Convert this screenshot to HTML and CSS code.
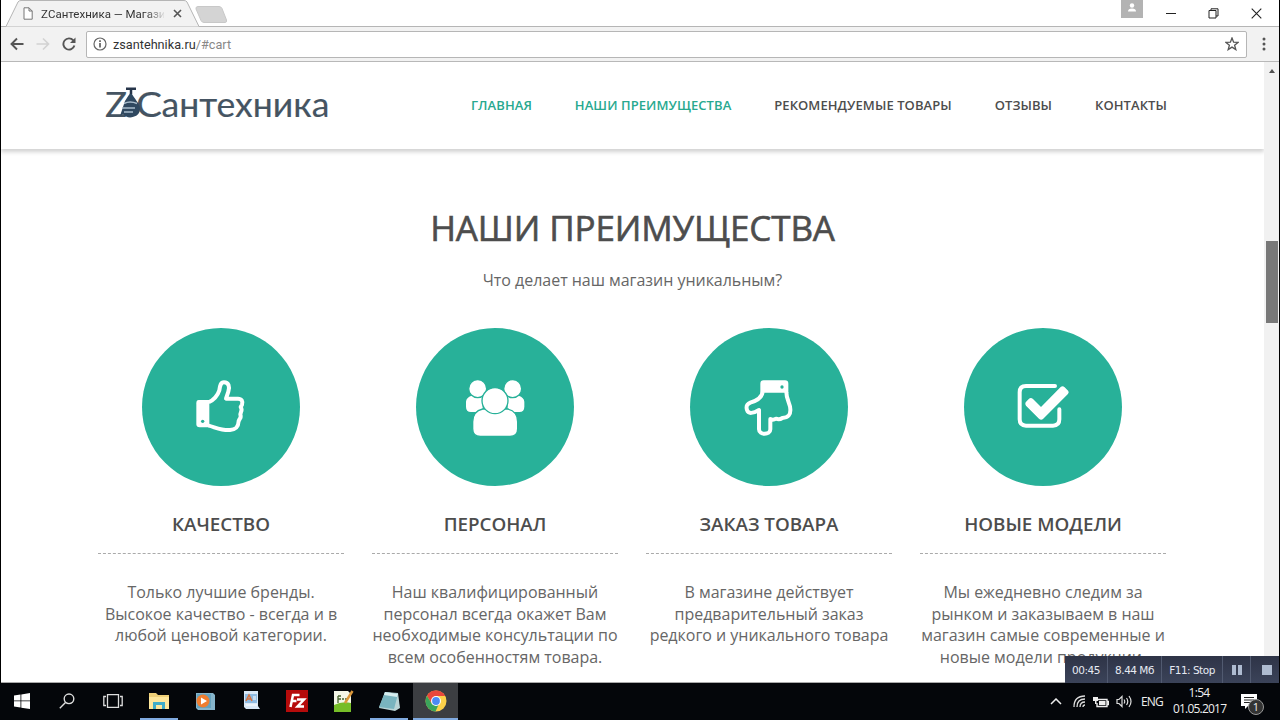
FILE: index.html
```html
<!DOCTYPE html>
<html lang="ru">
<head>
    <meta charset="UTF-8">
    <title>ZСантехника — Магазин</title>
    <link rel="stylesheet" href="styles.css">
</head>
<body>
    <div class="screen">
        <div class="titlebar">
            <div class="tab">
                <svg class="tab-shape" width="200" height="27" viewBox="0 0 200 27"><path d="M0 26.500H5L17 2Q18 .5 20 .5H183Q185 .5 186 2L198 26.500" fill="#f2f2f2" stroke="#b5b5b5"/></svg>
                <svg class="tab-doc" width="10" height="13" viewBox="0 0 10 13"><path d="M1 .8H6L9.200 4V12.200H1ZM6 .8V4H9.200" fill="#fff" stroke="#777"/></svg>
                <span class="tab-title">ZСантехника — Магазин</span>
                <svg class="tab-close" width="9" height="9" viewBox="0 0 9 9"><path d="M1 1L8 8M8 1L1 8" stroke="#555" stroke-width="1.600"/></svg>
            </div>
            <svg class="new-tab" width="33" height="17" viewBox="0 0 33 17"><path d="M3 .5H24Q26 .5 27 2.500L31.500 14Q32 16.500 30 16.500H9Q7 16.500 6 14.500L1 3Q.5 .5 3 .5Z" fill="#d4d4d4" stroke="#c8c8c8"/></svg>
            <div class="window-buttons">
                <svg class="user" width="22" height="18" viewBox="0 0 22 18"><path d="M0 0H22V18H0Z" fill="#b3b3b3"/><circle cx="11" cy="5.500" r="2.200" fill="#fff"/><path d="M7 11.500Q7 8.500 11 8.500T15 11.500Z" fill="#fff"/></svg>
                <svg class="minimize" width="10" height="10" viewBox="0 0 10 10"><path d="M0 5.500H10" stroke="#222"/></svg>
                <svg class="restore" width="11" height="11" viewBox="0 0 11 11"><path d="M1 2.500H8V10H1ZM3 2.500V.8H10V8H8" fill="none" stroke="#222"/></svg>
                <svg class="close" width="11" height="11" viewBox="0 0 11 11"><path d="M.7 .7L10.300 10.300M10.300 .7L.7 10.300" stroke="#222" stroke-width="1.100"/></svg>
            </div>
        </div>

        <div class="toolbar">
            <svg width="14" height="14" viewBox="0 0 14 14"><path d="M13.500 7H1.500M7 1.500L1.500 7L7 12.500" fill="none" stroke="#555" stroke-width="1.900"/></svg>
            <svg width="14" height="14" viewBox="0 0 14 14"><path d="M.5 7H12.500M7 1.500L12.500 7L7 12.500" fill="none" stroke="#d2d2d2" stroke-width="1.700"/></svg>
            <svg width="14" height="14" viewBox="0 0 14 14"><path d="M11.300 3.400A5.600 5.600 0 1 0 12.400 8.500" fill="none" stroke="#555" stroke-width="1.900"/><path d="M13.500 .5V6H8Z" fill="#555"/></svg>
            <div class="address">
                <svg width="14" height="14" viewBox="0 0 14 14"><circle cx="7" cy="7" r="6" fill="none" stroke="#666" stroke-width="1.200"/><path d="M7 6V10.500M7 3.300V4.900" stroke="#555" stroke-width="1.600"/></svg>
                <span class="url">zsantehnika.ru<span>/#cart</span></span>
                <svg class="star" width="14" height="14" viewBox="0 0 14 14"><path d="M7 1L8.600 5.200L13 5.400L9.600 8.200L10.800 12.600L7 10.100L3.200 12.600L4.400 8.200L1 5.400L5.400 5.200Z" fill="none" stroke="#555" stroke-width="1.300"/></svg>
            </div>
            <svg class="dots" width="4" height="14" viewBox="0 0 4 14" fill="#555"><circle cx="2" cy="2" r="1.500"/><circle cx="2" cy="7" r="1.500"/><circle cx="2" cy="12" r="1.500"/></svg>
        </div>

        <div class="viewport">
            <div class="page">
                <header class="header">
                    <svg class="logo" width="228" height="40" viewBox="0 0 228 40">
                        <text class="logo-text" x="0" y="31" textLength="22" lengthAdjust="spacingAndGlyphs">Z</text>
                        <text class="logo-text" x="31" y="31" textLength="26" lengthAdjust="spacingAndGlyphs">С</text>
                        <text class="logo-text" x="56.500" y="31" textLength="168" lengthAdjust="spacingAndGlyphs">антехника</text>
                        <path d="M26 6C29 13 35 17 35 23A9.500 8.500 0 0 1 18 28L15 30L20 15Q23 10 26 6Z" fill="#2f4860"/>
                        <path d="M21 2.800H31M26 3V8" stroke="#26354a" stroke-width="2.500"/>
                        <path d="M19 17.500Q25 14.500 32 17.500M17 22H30M19 26H28" fill="none" stroke="#a9bccb" stroke-width="1.500"/>
                    </svg>
                    <nav class="menu">
                        <a class="active">ГЛАВНАЯ</a>
                        <a class="active">НАШИ ПРЕИМУЩЕСТВА</a>
                        <a>РЕКОМЕНДУЕМЫЕ ТОВАРЫ</a>
                        <a>ОТЗЫВЫ</a>
                        <a>КОНТАКТЫ</a>
                    </nav>
                </header>

                <h1>НАШИ ПРЕИМУЩЕСТВА</h1>
                <p class="subtitle">Что делает наш магазин уникальным?</p>

                <div class="features">
                    <div class="feature">
                        <svg class="circle" viewBox="38 24 474 474">
                            <path d="M208 240H240V322H211Q201 322 201 312V250Q201 240 208 240Z" fill="#fff"/>
                            <path d="M238 247C250 241 264 229 270 211C272 199 273 187 284 187C298 187 302 200 297 215L290 236H326C337 236 341 244 338 254L334 261Q339 269 335 276L333 283Q336 291 331 297L328 303C327 323 318 329 302 330C278 332 258 322 238 317" fill="none" stroke="#fff" stroke-width="12" stroke-linejoin="round"/>
                            <circle cx="220" cy="304" r="5" fill="#28b199"/>
                        </svg>
                        <h3>КАЧЕСТВО</h3>
                        <p>Только лучшие бренды.<br>Высокое качество - всегда и в<br>любой ценовой категории.</p>
                    </div>
                    <div class="feature">
                        <svg class="circle" viewBox="33 24 474 474">
                            <g fill="#fff" stroke="#28b199" stroke-width="4">
                                <path d="M199 225H235V278H198Q181 278 181 260V245Q182 231 199 225ZM342 225H306V278H343Q360 278 360 260V245Q359 231 342 225Z"/>
                                <circle cx="218" cy="206" r="27"/>
                                <circle cx="323" cy="206" r="27"/>
                                <path d="M233 267H308Q338 274 338 305V326Q338 349 315 349H226Q203 349 203 326V305Q203 274 233 267Z"/>
                                <circle cx="270" cy="242" r="39"/>
                            </g>
                        </svg>
                        <h3>ПЕРСОНАЛ</h3>
                        <p>Наш квалифицированный<br>персонал всегда окажет Вам<br>необходимые консультации по<br>всем особенностям товара.</p>
                    </div>
                    <div class="feature">
                        <svg class="circle" viewBox="32 24 474 474">
                            <path d="M253 181H317Q327 181 327 191V218H243V191Q243 181 253 181Z" fill="#fff"/>
                            <path d="M250 216C248 233 232 242 213 248C201 253 200 260 203 270C207 283 222 280 239 270V328C239 346 273 346 273 328V297Q281 302 290 296Q300 300 309 294C327 293 334 284 333 268C333 250 321 240 321 216" fill="none" stroke="#fff" stroke-width="12" stroke-linejoin="round"/>
                            <circle cx="308" cy="201" r="5" fill="#28b199"/>
                        </svg>
                        <h3>ЗАКАЗ ТОВАРА</h3>
                        <p>В магазине действует<br>предварительный заказ<br>редкого и уникального товара</p>
                    </div>
                    <div class="feature">
                        <svg class="circle" viewBox="27 24 474 474">
                            <path d="M300 198H213Q194 198 194 217V298Q194 317 213 317H294Q313 317 313 298V268" fill="none" stroke="#fff" stroke-width="12" stroke-linecap="round"/>
                            <path d="M220 244L258 283L334 207" fill="none" stroke="#28b199" stroke-width="36"/>
                            <path d="M212 247L222 236Q228 232 234 237L258 261L317 201Q323 196 329 202L340 213Q343 218 338 223L264 297Q258 302 252 296L213 257Q209 252 212 247Z" fill="#fff"/>
                        </svg>
                        <h3>НОВЫЕ МОДЕЛИ</h3>
                        <p>Мы ежедневно следим за<br>рынком и заказываем в наш<br>магазин самые современные и<br>новые модели продукции.</p>
                    </div>
                </div>
            </div>
            <div class="scrollbar">
                <div class="scroll-up"></div>
                <div class="scroll-thumb"></div>
            </div>
        </div>

        <div class="taskbar">
            <div class="task"><svg width="16" height="16" viewBox="0 0 16 16" fill="#fff"><path d="M0 2.500L6.500 1.500V7.500H0ZM7.300 1.400L16 0V7.500H7.300ZM0 8.300H6.500V14.500L0 13.500ZM7.300 8.300H16V16L7.300 14.700Z"/></svg></div>
            <div class="task"><svg width="16" height="16" viewBox="0 0 16 16" fill="none" stroke="#ddd" stroke-width="1.400"><circle cx="10" cy="5.800" r="4.800"/><path d="M6.500 9.500L.8 15.200"/></svg></div>
            <div class="task"><svg width="20" height="14" viewBox="0 0 20 14" fill="none" stroke="#ddd" stroke-width="1.300"><path d="M4.500 .7H15.500V13.300H4.500ZM3 2.500H.8V11.500H3M17 2.500H19.200V11.500H17"/></svg></div>
            <div class="task open"><svg width="20" height="18" viewBox="0 0 20 18"><path d="M0 1H7L9 3H20V17H0Z" fill="#efd078"/><path d="M0 5H20V17H0Z" fill="#ffe79b"/><path d="M4 10H16V17H13V13H7V17H4Z" fill="#41adc8"/></svg></div>
            <div class="task"><svg width="20" height="18" viewBox="0 0 20 18"><path d="M1 1H18L20 3V18H3L1 16Z" fill="#86b4cb"/><path d="M2 2H16V16H2Z" fill="#65a2be"/><circle cx="8" cy="9" r="6.500" fill="#ef7d30"/><path d="M6 5.500L12 9L6 12.500Z" fill="#fff"/></svg></div>
            <div class="task"><svg width="17" height="19" viewBox="0 0 17 19"><path d="M1 0H15V15L17 18H3L1 16Z" fill="#d9e8f6"/><path d="M2 3H14V12H2Z" fill="#8fbbe2"/><path d="M3 10L6 4L9 10M4.500 8H8" fill="none" stroke="#d7733e" stroke-width="1.500"/><path d="M10 6H13M10 8H13M3 14H14" stroke="#fff"/></svg></div>
            <div class="task"><svg width="22" height="22" viewBox="0 0 22 22"><path d="M0 0H22V22H0Z" fill="#b50b0b"/><path d="M4.500 17L7 5H13.500M5.700 11H10.500M11 9.500H18L11.500 16.500H18" fill="none" stroke="#fff" stroke-width="2.500"/></svg></div>
            <div class="task"><svg width="21" height="22" viewBox="0 0 21 22"><path d="M1 1H15L18 4V22H1Z" fill="#f5f7e8"/><path d="M1 15Q9 11 18 13V22H1Z" fill="#76bd28"/><path d="M5 6V13M5 6H8M5 9H8M9 9H11M12 9H14" stroke="#46622c" stroke-width="1.300"/><path d="M19.500 1L12 13" stroke="#dc983b" stroke-width="2.500"/></svg></div>
            <div class="task open"><svg width="21" height="20" viewBox="0 0 21 20"><path d="M6 1L19 2L21 17L16 20L0 17Z" fill="#b9d4d6"/><path d="M6 1L19 3L15 18L0 16Z" fill="#79b4bf"/><path d="M6 1L19 3L18 6L5 4Z" fill="#d7edef"/></svg></div>
            <div class="task open current"><svg width="22" height="22" viewBox="0 0 22 22"><circle cx="11" cy="11" r="10.500" fill="#fcd14a"/><path d="M1.900 5.800A10.500 10.500 0 0 1 20.200 6H11L6.600 13.500Z" fill="#e8473c"/><path d="M1.900 5.800L6.600 13.500L13.300 15.300L10.500 21.500A10.500 10.500 0 0 1 1.900 5.800Z" fill="#3ba55b"/><circle cx="11" cy="11" r="5" fill="#fff"/><circle cx="11" cy="11" r="3.900" fill="#4c8af4"/></svg></div>
            <div class="tray">
                <svg width="12" height="7" viewBox="0 0 12 7"><path d="M1 6L6 1L11 6" fill="none" stroke="#eee" stroke-width="1.500"/></svg>
                <svg class="wifi" width="13" height="13" viewBox="0 0 13 13" fill="none" stroke="#ddd" stroke-width="1.300"><path d="M1 12Q1 1 12 1M4 12Q4 4 12 4M7 12Q7 7 12 7M10 12Q10 10 12 10"/></svg>
                <svg class="battery" width="16" height="12" viewBox="0 0 16 12"><path d="M4 3.500H14V10.500H4V7M14 5.500H15.500V8.500H14" fill="none" stroke="#eee" stroke-width="1.400"/><path d="M6 5H12.500V9H6ZM0 1H5V5H3.500V8H2V5H0Z" fill="#eee"/></svg>
                <svg class="sound" width="16" height="13" viewBox="0 0 16 13" fill="none" stroke="#ddd" stroke-width="1.200"><path d="M1 4.500H3L6 1.500V11.500L3 8.500H1ZM8 4.500Q9.500 6.500 8 8.500M10.500 3Q13 6.500 10.500 10M13 1Q17 6.500 13 12"/></svg>
                <span class="lang">ENG</span>
                <div class="clock"><div>1:54</div><div class="date">01.05.2017</div></div>
                <div class="notify">
                    <svg width="16" height="16" viewBox="0 0 16 16"><path d="M0 0H16V12H7L4 15V12H0Z" fill="#fff"/><path d="M3 3.500H13M3 6H13M3 8.500H10" stroke="#222"/></svg>
                    <span class="badge">1</span>
                </div>
            </div>
        </div>

        <div class="recorder">
            <span class="r-time">00:45</span>
            <span class="r-size">8.44 Мб</span>
            <span class="r-stop">F11: Stop</span>
            <span class="r-icon"><svg width="10" height="10" viewBox="0 0 10 10" fill="#aebbd0"><path d="M0 0H4V10H0ZM6 0H10V10H6Z"/></svg></span>
            <span class="r-icon last"><svg width="10" height="10" viewBox="0 0 10 10" fill="#aebbd0"><path d="M0 0H10V10H0Z"/></svg></span>
        </div>
    </div>
</body>
</html>
```
FILE: styles.css
```css
* {
    margin: 0;
    padding: 0;
    box-sizing: border-box;
}

body {
    width: 1280px;
    height: 720px;
    overflow: hidden;
    background: #000;
    font-family: "Open Sans", "Noto Sans", sans-serif;
}

svg {
    display: block;
    flex: none;
}

.screen {
    position: relative;
    display: flex;
    flex-direction: column;
    width: 1280px;
    height: 720px;
}

/* browser window */
.titlebar {
    display: flex;
    height: 27px;
    margin: 0 1px;
    background: #fff;
    border-bottom: 1px solid #b5b5b5;
}

.tab {
    position: relative;
    display: flex;
    align-items: center;
    width: 194px;
    height: 27px;
    padding-left: 22px;
}

.tab-shape {
    position: absolute;
    left: 0;
    top: 0;
}

.tab-doc,
.tab-title,
.tab-close {
    position: relative;
}

.tab-title {
    width: 123px;
    margin-left: 8px;
    overflow: hidden;
    white-space: nowrap;
    font: 11.5px Roboto, sans-serif;
    color: #333;
    -webkit-mask-image: linear-gradient(to right, #000 105px, transparent 125px);
    mask-image: linear-gradient(to right, #000 105px, transparent 125px);
}

.tab-close {
    margin-left: 9px;
}

.new-tab {
    margin-top: 6px;
}

.window-buttons {
    display: flex;
    align-items: center;
    margin-left: auto;
    padding-right: 17px;
}

.user {
    align-self: flex-start;
    margin-right: 23px;
}

.minimize {
    margin-right: 32px;
}

.restore {
    margin-right: 32px;
}

.toolbar {
    display: flex;
    align-items: center;
    gap: 12px;
    height: 35px;
    margin: 0 1px;
    padding: 0 13px 0 9px;
    background: #f2f2f2;
    border-bottom: 1px solid #b8b8b8;
}

.address {
    display: flex;
    flex: 1;
    align-items: center;
    height: 27px;
    margin-left: -2px;
    padding: 0 7px 0 6px;
    background: #fff;
    border: 1px solid #b6b6b6;
    border-radius: 2px;
}

.url {
    margin-left: 6px;
    font: 12.7px Roboto, sans-serif;
    color: #333;
}

.url span {
    color: #888;
}

.star {
    margin-left: auto;
}

.dots {
    margin-left: 3px;
}

.viewport {
    display: flex;
    height: 621px;
    margin: 0 1px;
    background: #fff;
    border-bottom: 1px solid #aaa;
}

.page {
    flex: 1;
    height: 620px;
    overflow: hidden;
    color: #4d4d4d;
    text-align: center;
}

.scrollbar {
    width: 15px;
    padding: 7px 1px 0 2px;
    background: #f1f1f1;
}

.scroll-up {
    width: 6px;
    height: 4px;
    margin-left: 3px;
    background: #505050;
    clip-path: polygon(50% 0, 100% 100%, 0 100%);
}

.scroll-thumb {
    height: 82px;
    margin-top: 168px;
    background: #787878;
}

/* site */
.header {
    display: flex;
    height: 87px;
    padding: 24px 97px 0 104px;
    box-shadow: 0 3px 4px rgba(0, 0, 0, 0.18);
}

.logo-text {
    font: 34px Lato, sans-serif;
    fill: #455462;
    stroke: #455462;
    stroke-width: 0.15px;
}

.menu {
    display: flex;
    justify-content: space-between;
    width: 696px;
    margin-left: auto;
    padding-top: 10px;
    font-size: 13px;
    font-weight: 600;
    line-height: 18px;
    letter-spacing: 0.08px;
    white-space: nowrap;
}

.menu .active {
    color: #28a98f;
}

/* a touch heavier than regular, lighter than semibold */
h1 {
    margin-top: 55px;
    font-size: 35px;
    font-weight: 400;
    line-height: 48px;
    letter-spacing: -0.15px;
    -webkit-text-stroke: 0.6px #4d4d4d;
}

.subtitle {
    margin-top: 17px;
    font-size: 16px;
    line-height: 22px;
    letter-spacing: -0.03px;
    color: #666;
}

.features {
    display: grid;
    grid-template-columns: repeat(4, 246px);
    column-gap: 28px;
    margin: 37px 0 0 97px;
}

.feature {
    display: flex;
    flex-direction: column;
    align-items: center;
}

.circle {
    width: 158px;
    height: 158px;
    border-radius: 50%;
    background: #28b199;
}

h3 {
    width: 246px;
    height: 68px;
    padding-top: 25px;
    border-bottom: 1px dashed #aaa;
    font-size: 18.8px;
    font-weight: 600;
    line-height: 26px;
}

.feature p {
    margin-top: 28px;
    font-size: 16px;
    line-height: 21.6px;
    letter-spacing: -0.02px;
    color: #666;
    white-space: nowrap;
}

/* windows taskbar */
.taskbar {
    display: flex;
    height: 37px;
    background: #04060a;
    color: #eee;
}

.task {
    display: flex;
    align-items: center;
    justify-content: center;
    width: 46px;
    border-bottom: 2px solid transparent;
}

.task:first-child {
    width: 44px;
}

.task.open {
    width: 38px;
    margin: 0 4px;
    border-color: #80aae0;
}

.task.current {
    width: 45px;
    margin: 0 0 0 1px;
    background: #3c3e42;
}

.tray {
    display: flex;
    align-items: center;
    margin-left: auto;
    padding-right: 15px;
    font: 12px "Open Sans", sans-serif;
}

.wifi {
    margin-left: 11px;
}

.battery {
    margin-left: 7px;
}

.sound {
    margin-left: 7px;
}

.lang {
    margin-left: 9px;
    letter-spacing: -0.8px;
}

.clock {
    width: 52px;
    margin-left: 10px;
    padding-bottom: 1px;
    line-height: 16px;
    text-align: center;
}

.clock div {
    letter-spacing: -0.7px;
    white-space: nowrap;
}

.clock .date {
    letter-spacing: -0.8px;
}

.notify {
    position: relative;
    width: 24px;
    margin-left: 16px;
}

.badge {
    position: absolute;
    left: 7px;
    top: 5px;
    width: 16px;
    height: 16px;
    border: 1px solid #999;
    border-radius: 50%;
    background: #333;
    font-size: 11px;
    line-height: 14px;
    text-align: center;
}

/* screen recorder panel lies over the page corner */
.recorder {
    position: absolute;
    left: 1065px;
    top: 656px;
    display: flex;
    width: 214px;
    height: 27px;
    background: linear-gradient(#2e3447, #3b4359);
    font: 10.5px "DejaVu Sans", sans-serif;
    letter-spacing: -0.5px;
    color: #e6eaf2;
}

.recorder span {
    display: flex;
    align-items: center;
    justify-content: center;
    border-right: 1px solid #515a70;
    white-space: nowrap;
}

.r-time {
    width: 43px;
}

.r-size {
    width: 54px;
}

.r-stop {
    width: 61px;
}

.r-icon {
    width: 28px;
}

.recorder .last {
    border: 0;
    padding-left: 4px;
}
```
